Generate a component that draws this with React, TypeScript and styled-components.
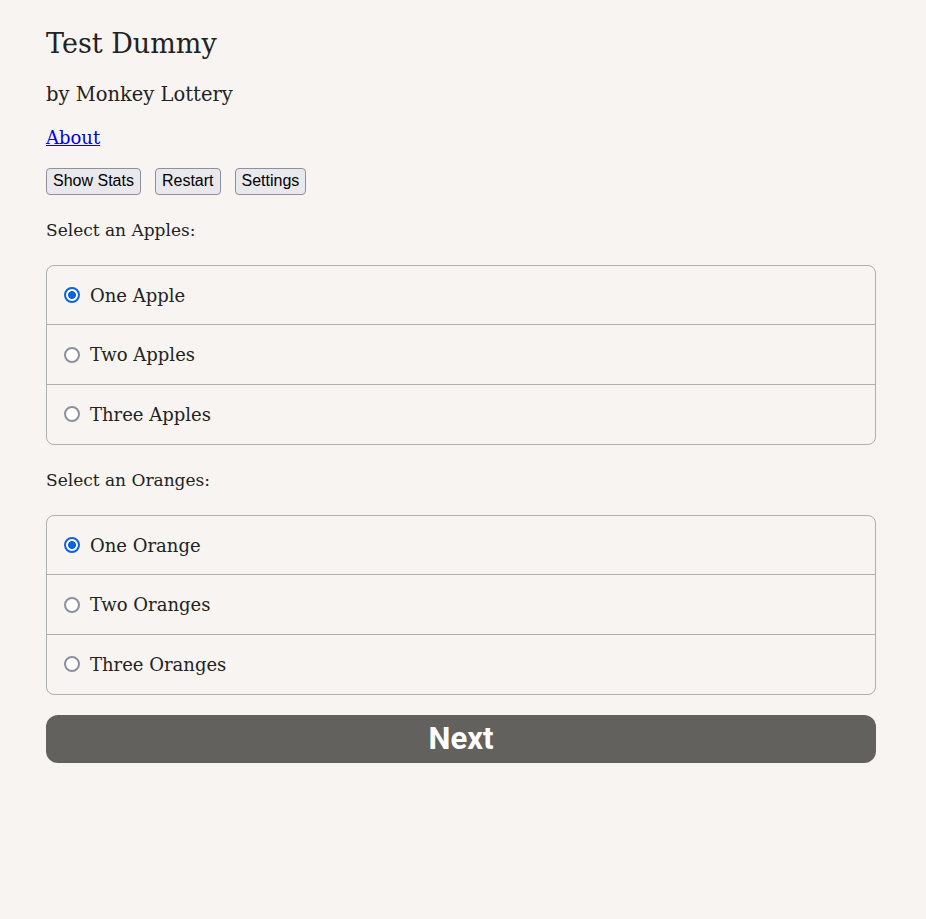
import React, { useState } from 'react';
import styled, { createGlobalStyle } from 'styled-components';

const GlobalStyle = createGlobalStyle`
  html, body {
    margin: 0;
    padding: 0;
    background: #f7f4f1;
  }
  body {
    font-family: Georgia, "DejaVu Serif", "Liberation Serif", serif;
    color: #222;
  }
`;

const Page = styled.div`
  width: 830px;
  padding: 20px 0 40px 46px;
`;

const Title = styled.h1`
  font-size: 27px;
  font-weight: 400;
  margin: 8px 0 0;
  line-height: 1.2;
`;

const Byline = styled.h2`
  font-size: 19.5px;
  font-weight: 400;
  margin: 23px 0 0;
  line-height: 1.2;
`;

const AboutLink = styled.a`
  display: inline-block;
  margin-top: 20px;
  font-size: 18px;
  color: #0000ee;
`;

const Toolbar = styled.div`
  display: flex;
  gap: 14px;
  margin-top: 20px;
`;

const ToolButton = styled.button`
  font-family: "Liberation Sans", Arial, sans-serif;
  font-size: 16px;
  padding: 2px 6px;
  height: 27px;
  background: #e9e9ed;
  color: #000;
  border: 1px solid #8f8f9d;
  border-radius: 4px;
`;

const Prompt = styled.p`
  font-size: 17px;
  margin: 25px 0 25px;
`;

const OptionList = styled.div`
  border: 1px solid #b0b0b0;
  border-radius: 8px;
  overflow: hidden;
`;

const Option = styled.label`
  display: flex;
  align-items: center;
  gap: 10px;
  height: 58.67px;
  padding: 0 16px;
  font-size: 18px;
  cursor: pointer;
  & + & {
    border-top: 1px solid #b0b0b0;
  }
`;

const Radio = styled.input`
  appearance: none;
  margin: 0 0 0 1px;
  width: 16px;
  height: 16px;
  border-radius: 50%;
  border: 2px solid #8f8f9d;
  background: #fff;
  flex-shrink: 0;
  &:checked {
    border-color: #0b64dd;
    background: radial-gradient(circle, #0b64dd 0 3.6px, #fff 4.2px);
  }
`;

const NextButton = styled.button`
  display: block;
  width: 100%;
  margin-top: 20px;
  height: 48px;
  border: none;
  border-radius: 12px;
  background: #63615e;
  color: #fff;
  font-family: Roboto, "Liberation Sans", Arial, sans-serif;
  font-weight: 700;
  font-size: 31px;
`;

const groups = [
  { name: 'apples', label: 'Select an Apples:', options: ['One Apple', 'Two Apples', 'Three Apples'] },
  { name: 'oranges', label: 'Select an Oranges:', options: ['One Orange', 'Two Oranges', 'Three Oranges'] },
];

const App = () => {
  const [picked, setPicked] = useState<Record<string, number>>({ apples: 0, oranges: 0 });

  return (
    <Page>
      <GlobalStyle />
      <Title>Test Dummy</Title>
      <Byline>by Monkey Lottery</Byline>
      <AboutLink href="#">About</AboutLink>
      <Toolbar>
        <ToolButton>Show Stats</ToolButton>
        <ToolButton>Restart</ToolButton>
        <ToolButton>Settings</ToolButton>
      </Toolbar>
      {groups.map((g) => (
        <div key={g.name}>
          <Prompt>{g.label}</Prompt>
          <OptionList>
            {g.options.map((opt, i) => (
              <Option key={opt}>
                <Radio
                  type="radio"
                  name={g.name}
                  checked={picked[g.name] === i}
                  onChange={() => setPicked({ ...picked, [g.name]: i })}
                />
                {opt}
              </Option>
            ))}
          </OptionList>
        </div>
      ))}
      <NextButton>Next</NextButton>
    </Page>
  );
};

export default App;
